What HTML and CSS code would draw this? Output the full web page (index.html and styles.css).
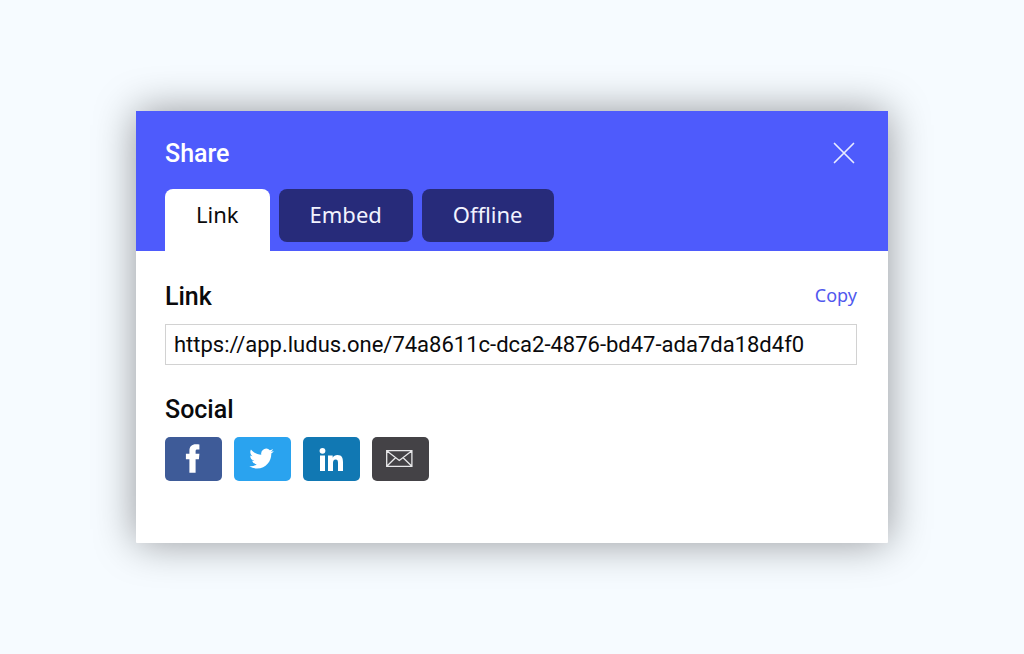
FILE: index.html
```
<!DOCTYPE html>
<html lang="en">

<head>
  <meta charset="UTF-8" />
  <meta name="viewport" content="width=device-width, initial-scale=1.0" />
  <title>Share</title>
  <link rel="stylesheet" href="styles.css">
</head>

<body>
  <div class="share-modal" role="dialog" aria-labelledby="share-title">
    <header class="modal-header">
      <div class="title-row">
        <h1 id="share-title">Share</h1>
        <button class="close" type="button" aria-label="Close">
          <svg width="22" height="22" viewBox="0 0 22 22">
            <path d="M1.500 1.500L20.500 20.500M20.500 1.500L1.500 20.500" fill="none" stroke="currentColor" stroke-width="1.700" stroke-linecap="round" />
          </svg>
        </button>
      </div>
      <div class="tabs" role="tablist">
        <button class="tab active" type="button" role="tab" aria-selected="true">Link</button>
        <button class="tab" type="button" role="tab" aria-selected="false">Embed</button>
        <button class="tab" type="button" role="tab" aria-selected="false">Offline</button>
      </div>
    </header>
    <main class="modal-body">
      <div class="label-row">
        <label for="link">Link</label>
        <button class="copy" type="button">Copy</button>
      </div>
      <input id="link" class="link-input" type="text" readonly value="https://app.ludus.one/74a8611c-dca2-4876-bd47-ada7da18d4f0" />
      <h2>Social</h2>
      <div class="social">
        <a class="facebook" href="#" aria-label="Facebook">
          <svg width="57" height="44" viewBox="0 0 57 44">
            <path d="M34.400 7.500v5h-2.200c-1.200 0-1.600.6-1.600 1.700v2.500h3.800l-.5 5.500h-3.300v13.500h-6.200V22.200h-3.500v-5.500h3.500v-2.700c0-4.500 2.400-6.700 6.500-6.700 1.500 0 2.700 0 3.500.2z" fill="#fff" />
          </svg>
        </a>
        <a class="twitter" href="#" aria-label="Twitter">
          <svg width="57" height="44" viewBox="0 0 57 44">
            <path transform="translate(15.300 9.300) scale(1.020)" d="M23.953 4.570a10 10 0 01-2.825.775 4.958 4.958 0 002.163-2.723c-.951.555-2.005.959-3.127 1.184a4.920 4.920 0 00-8.384 4.482C7.690 8.095 4.067 6.130 1.640 3.162a4.822 4.822 0 00-.666 2.475c0 1.710.870 3.213 2.188 4.096a4.904 4.904 0 01-2.228-.616v.060a4.923 4.923 0 003.946 4.827 4.996 4.996 0 01-2.212.085 4.936 4.936 0 004.604 3.417 9.867 9.867 0 01-6.102 2.105c-.390 0-.779-.023-1.170-.067a13.995 13.995 0 007.557 2.209c9.053 0 13.998-7.496 13.998-13.985 0-.210 0-.420-.015-.630A9.935 9.935 0 0024 4.590z" fill="#fff" />
          </svg>
        </a>
        <a class="linkedin" href="#" aria-label="LinkedIn">
          <svg width="57" height="44" viewBox="0 0 57 44" fill="#fff">
            <circle cx="19.500" cy="13.800" r="2.900" />
            <path d="M17 18.500h5V34h-5zM25 18.500h4.700v2.200c.9-1.500 2.500-2.600 4.800-2.600 4.300 0 5.500 2.800 5.500 7.200V34h-5v-8c0-2.100-.3-3.600-2.300-3.600-2.100 0-2.700 1.600-2.700 3.600v8h-5z" />
          </svg>
        </a>
        <a class="email" href="#" aria-label="Email">
          <svg width="57" height="44" viewBox="0 0 57 44">
            <path d="M14.700 13.700h25.200v15.600H14.700zM15 14l12.300 9.500L39.600 14M15 29l8.500-8.200M39.600 29l-8.500-8.200" fill="none" stroke="#e8e8ea" stroke-width="1.300" />
          </svg>
        </a>
      </div>
    </main>
  </div>
</body>

</html>
```
FILE: styles.css
```
* {
  box-sizing: border-box;
}

body {
  margin: 0;
  min-height: 100vh;
  padding: 24px;
  display: flex;
  align-items: center;
  justify-content: center;
  background-color: #f6fbff;
  font-family: Roboto, sans-serif;
  color: #0a0a0c;
}

button {
  border: 0;
  padding: 0;
  background: none;
  cursor: pointer;
}

h1,
h2 {
  margin: 0;
  font-weight: 500;
}

.share-modal {
  width: 100%;
  max-width: 752px;
  background-color: #fff;
  border-radius: 1px;
  box-shadow: 0 0 42px rgba(0, 0, 0, 0.4);
}

.modal-header {
  padding: 26px 31px 0 29px;
  background-color: #4e5bfc;
  color: #fff;
}

.title-row,
.label-row {
  display: flex;
  align-items: center;
  justify-content: space-between;
}

h1 {
  font-size: 25px;
  line-height: 34px;
}

.close {
  display: flex;
  padding: 1px 2px 3px;
  color: #e9ecff;
}

.tabs {
  display: flex;
  align-items: flex-start;
  gap: 9px;
  margin-top: 18px;
}

.tab {
  height: 53px;
  padding: 0 31px 4px;
  border-radius: 8px;
  background-color: #272b7a;
  color: #f2f3ff;
  font-family: "Noto Sans", sans-serif;
  font-size: 22px;
}

.tab.active {
  height: 62px;
  padding-bottom: 13px;
  border-radius: 8px 8px 0 0;
  background-color: #fff;
  color: #0a0a0c;
}

.modal-body {
  padding: 29px 31px 62px 29px;
}

.label-row label,
h2 {
  font-size: 25px;
  font-weight: 500;
  line-height: 34px;
}

.copy {
  padding-bottom: 4px;
  color: #5059ee;
  font-family: "Noto Sans", sans-serif;
  font-size: 18px;
}

.link-input {
  display: block;
  width: 100%;
  height: 41px;
  margin-top: 10px;
  padding: 0 8px;
  border: 1px solid #d2d2d2;
  background-color: #fff;
  color: #0a0a0c;
  font-family: Roboto, sans-serif;
  font-size: 22px;
}

h2 {
  margin-top: 28px;
}

.social {
  display: flex;
  gap: 12px;
  margin-top: 10px;
}

.social a {
  display: flex;
  border-radius: 5px;
}

.facebook {
  background-color: #3e5b98;
}

.twitter {
  background-color: #2aa3ef;
}

.linkedin {
  background-color: #1178b3;
}

.email {
  background-color: #444246;
}
```
